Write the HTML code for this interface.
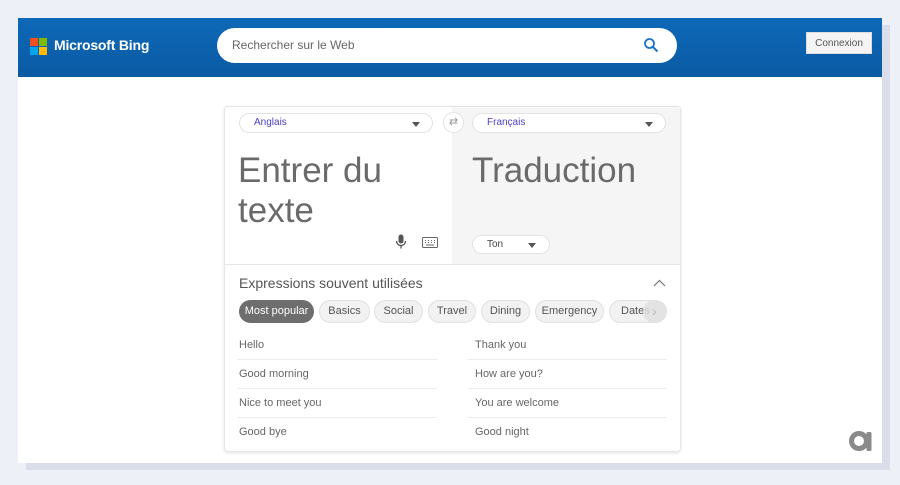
<!DOCTYPE html>
<html><head><meta charset="utf-8"><style>
*{margin:0;padding:0;box-sizing:border-box}
body{width:900px;height:485px;background:#edf0f7;position:relative;overflow:hidden;font-family:"Liberation Sans",Arial,sans-serif}
.a{position:absolute}
.shadow{left:26px;top:25px;width:864px;height:445px;background:#d9deea}
.win{left:18px;top:18px;width:864px;height:445px;background:#fff;overflow:hidden}
.hdr{left:0;top:0;width:864px;height:59px;background:linear-gradient(#0e69b8,#0a5aa3)}
.pill{border:1px solid #e3e3e3;border-radius:12px;background:#fff}
.tri{width:0;height:0;border-left:4px solid transparent;border-right:4px solid transparent;border-top:5px solid #555}
.chip{position:absolute;top:300px;height:23px;border-radius:12px;background:#f2f2f2;border:1px solid #e0e0e0;font-size:11px;color:#555;text-align:center;line-height:21px}
.ph{position:absolute;font-size:11px;color:#666}
.ln{position:absolute;height:1px;background:#ececec}
</style></head><body>
<div class="a shadow"></div>
<div class="a win">
 <div class="a hdr">
  <div class="a" style="left:12px;top:20px;width:8px;height:8px;background:#f25022"></div>
  <div class="a" style="left:21px;top:20px;width:8px;height:8px;background:#7fba00"></div>
  <div class="a" style="left:12px;top:29px;width:8px;height:8px;background:#00a4ef"></div>
  <div class="a" style="left:21px;top:29px;width:8px;height:8px;background:#ffb900"></div>
  <div class="a" style="left:36px;top:19px;color:#fff;font-size:14px;font-weight:bold;letter-spacing:-0.2px">Microsoft Bing</div>
  <div class="a" style="left:199px;top:10px;width:460px;height:35px;background:#fff;border-radius:18px">
   <div class="a" style="left:15px;top:10px;font-size:12px;color:#666">Rechercher sur le Web</div>
   <svg class="a" style="left:426px;top:9px" width="16" height="16" viewBox="0 0 16 16"><circle cx="6.5" cy="6.5" r="4.5" fill="none" stroke="#1a73c8" stroke-width="1.8"/><path d="M10 10l4.5 4.5" stroke="#1a73c8" stroke-width="2"/></svg>
  </div>
  <div class="a" style="left:788px;top:14px;width:66px;height:22px;background:#f4f4f4;border:1px solid #ddd;font-size:10px;color:#555;text-align:center;line-height:22px">Connexion</div>
 </div>
</div>
<!-- card -->
<div class="a" style="left:224px;top:106px;width:457px;height:346px;background:#fff;border:1px solid #e6e6e6;border-radius:4px;box-shadow:0 1px 3px rgba(0,0,0,.12)"></div>
<div class="a" style="left:452px;top:107px;width:228px;height:157px;background:#f5f5f5"></div>
<div class="a" style="left:225px;top:264px;width:455px;height:1px;background:#e6e6e6"></div>
<div class="a pill" style="left:239px;top:113px;width:194px;height:20px"><div class="a" style="left:14px;top:3px;font-size:10px;color:#4a3fc6">Anglais</div><div class="a tri" style="left:172px;top:8px"></div></div>
<div class="a pill" style="left:443px;top:112px;width:21px;height:21px;border-radius:50%;font-size:11px;color:#999;text-align:center;line-height:18px">⇄</div>
<div class="a pill" style="left:472px;top:113px;width:194px;height:20px"><div class="a" style="left:14px;top:3px;font-size:10px;color:#4a3fc6">Français</div><div class="a tri" style="left:172px;top:8px"></div></div>
<div class="a" style="left:238px;top:151px;font-size:35px;line-height:40px;color:#6a6a6a;width:200px">Entrer du<br>texte</div>
<div class="a" style="left:472px;top:151px;font-size:35px;line-height:40px;color:#6a6a6a">Traduction</div>
<svg class="a" style="left:395px;top:234px" width="12" height="16" viewBox="0 0 12 16"><rect x="3.5" y="0.5" width="5" height="9" rx="2.5" fill="#555"/><path d="M1.5 7a4.5 4.5 0 0 0 9 0M6 11.5v3" stroke="#555" stroke-width="1.3" fill="none"/></svg>
<svg class="a" style="left:422px;top:237px" width="16" height="11" viewBox="0 0 16 11"><rect x="0.5" y="0.5" width="15" height="10" rx="1" fill="none" stroke="#666"/><path d="M3 3.5h1M6 3.5h1M9 3.5h1M12 3.5h1M3 5.5h1M6 5.5h1M9 5.5h1M12 5.5h1M4 8h8" stroke="#666"/></svg>
<div class="a pill" style="left:472px;top:235px;width:78px;height:19px"><div class="a" style="left:14px;top:3px;font-size:10px;color:#444">Ton</div><div class="a tri" style="left:55px;top:7px"></div></div>
<div class="a" style="left:239px;top:275px;font-size:14px;color:#555">Expressions souvent utilisées</div>
<svg class="a" style="left:653px;top:279px" width="13" height="8" viewBox="0 0 13 8"><path d="M1 7l5.5-5.5L12 7" stroke="#777" fill="none" stroke-width="1.2"/></svg>
<div class="chip" style="left:239px;width:75px;background:#6e6e6e;border-color:#6e6e6e;color:#fff">Most popular</div>
<div class="chip" style="left:319px;width:51px">Basics</div>
<div class="chip" style="left:374px;width:49px">Social</div>
<div class="chip" style="left:428px;width:48px">Travel</div>
<div class="chip" style="left:481px;width:49px">Dining</div>
<div class="chip" style="left:535px;width:69px">Emergency</div>
<div class="chip" style="left:609px;width:58px;text-align:left;padding-left:11px">Dates</div>
<div class="a" style="left:643px;top:300px;width:23px;height:23px;border-radius:50%;background:rgba(225,225,225,.85);color:#bbb;font-size:14px;text-align:center;line-height:22px">›</div>
<div class="ph" style="left:239px;top:339px">Hello</div>
<div class="ph" style="left:239px;top:368px">Good morning</div>
<div class="ph" style="left:239px;top:397px">Nice to meet you</div>
<div class="ph" style="left:239px;top:426px">Good bye</div>
<div class="ph" style="left:475px;top:339px">Thank you</div>
<div class="ph" style="left:475px;top:368px">How are you?</div>
<div class="ph" style="left:475px;top:397px">You are welcome</div>
<div class="ph" style="left:475px;top:426px">Good night</div>
<div class="ln" style="left:238px;top:359px;width:199px"></div>
<div class="ln" style="left:238px;top:388px;width:199px"></div>
<div class="ln" style="left:238px;top:417px;width:199px"></div>
<div class="ln" style="left:468px;top:359px;width:198px"></div>
<div class="ln" style="left:468px;top:388px;width:198px"></div>
<div class="ln" style="left:468px;top:417px;width:198px"></div>
<svg class="a" style="left:848px;top:427px" width="26" height="26" viewBox="0 0 26 26"><circle cx="11" cy="14" r="7.5" fill="none" stroke="#8a8a8a" stroke-width="5"/><rect x="18.5" y="5" width="5" height="19" rx="1.5" fill="#8a8a8a"/></svg>
</body></html>
